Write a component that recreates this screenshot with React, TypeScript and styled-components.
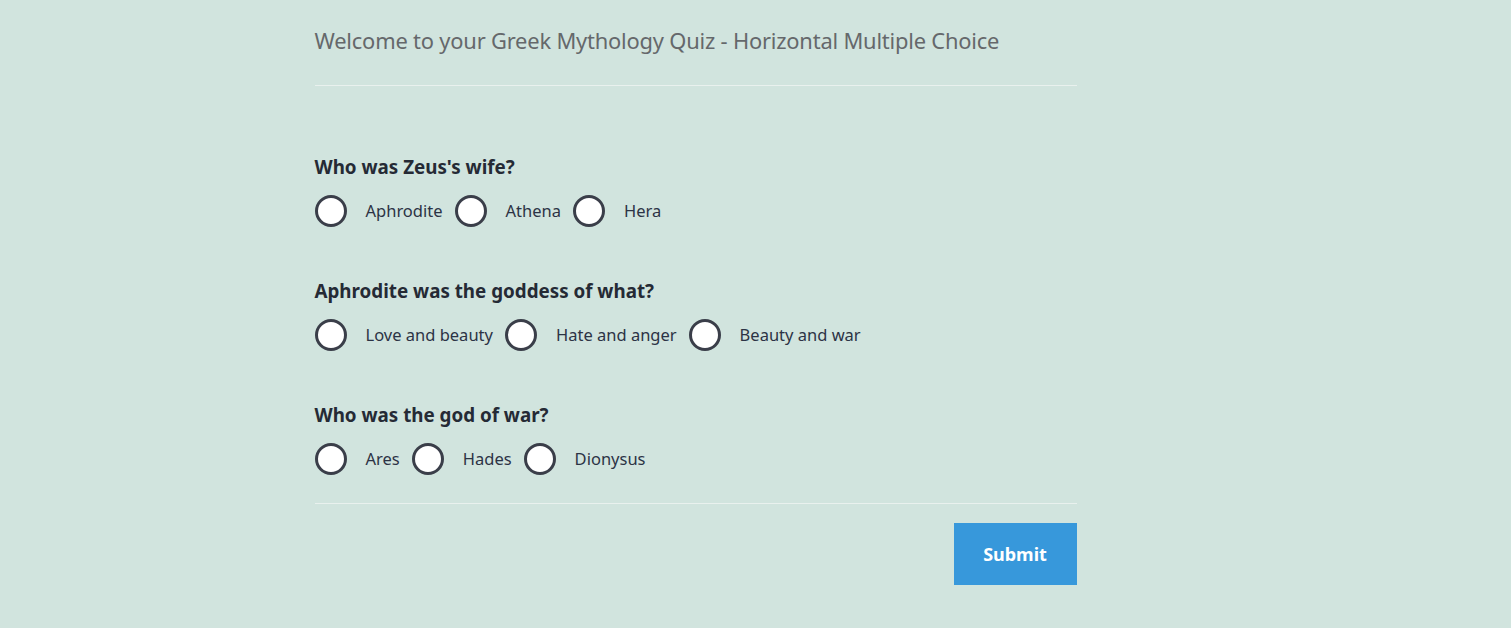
import React from 'react'
import styled, { createGlobalStyle } from 'styled-components'

const questions = [
  { q: "Who was Zeus's wife?", options: ['Aphrodite', 'Athena', 'Hera'] },
  { q: 'Aphrodite was the goddess of what?', options: ['Love and beauty', 'Hate and anger', 'Beauty and war'] },
  { q: 'Who was the god of war?', options: ['Ares', 'Hades', 'Dionysus'] },
]

const GlobalStyle = createGlobalStyle`
  html, body {
    margin: 0;
    background: #d1e4de;
    font-family: "Noto Sans", "Open Sans", sans-serif;
  }
`

export default function App() {
  return (
    <>
      <GlobalStyle />
      <S.Page>
        <S.Quiz>
          <S.Title>Welcome to your Greek Mythology Quiz - Horizontal Multiple Choice</S.Title>
          <S.Rule />
          <S.Questions>
            {questions.map((item, qi) => (
              <S.Question key={qi}>
                <S.Label>{item.q}</S.Label>
                <S.Options>
                  {item.options.map(opt => (
                    <S.Option key={opt}>
                      <S.Radio type="radio" name={`q${qi}`} />
                      <S.OptionText>{opt}</S.OptionText>
                    </S.Option>
                  ))}
                </S.Options>
              </S.Question>
            ))}
          </S.Questions>
          <S.Rule />
          <S.Footer>
            <S.Submit>Submit</S.Submit>
          </S.Footer>
        </S.Quiz>
      </S.Page>
    </>
  )
}

export const S = {
  Page: styled.div`
    min-height: 628px;
    display: flex;
    justify-content: center;
  `,
  Quiz: styled.div`
    width: 762px;
    margin-right: 120px;
    display: flex;
    flex-direction: column;
  `,
  Title: styled.h1`
    margin: 0;
    height: 85px;
    padding-bottom: 4px;
    box-sizing: border-box;
    display: flex;
    align-items: center;
    font-size: 21.9px;
    font-weight: 400;
    color: #65686b;
    letter-spacing: -0.2px;
  `,
  Rule: styled.hr`
    margin: 0;
    border: 0;
    border-top: 1px solid #e9f1ee;
  `,
  Questions: styled.div`
    display: flex;
    flex-direction: column;
    gap: 52px;
    padding: 69px 0 28px;
  `,
  Question: styled.div`
    display: flex;
    flex-direction: column;
    gap: 16px;
  `,
  Label: styled.div`
    font-size: 18.8px;
    font-weight: 700;
    color: #252a35;
    line-height: 24px;
  `,
  Options: styled.div`
    display: flex;
    align-items: center;
    gap: 12px;
  `,
  Option: styled.label`
    display: flex;
    align-items: center;
    gap: 19px;
    cursor: pointer;
  `,
  Radio: styled.input`
    appearance: none;
    margin: 0;
    width: 32px;
    height: 32px;
    border-radius: 50%;
    border: 3px solid #3a3e49;
    background: #fff;
    box-sizing: border-box;
  `,
  OptionText: styled.span`
    font-size: 16.5px;
    color: #2c3345;
    line-height: 32px;
  `,
  Footer: styled.div`
    display: flex;
    justify-content: flex-end;
    padding-top: 19px;
  `,
  Submit: styled.button`
    width: 123px;
    height: 62px;
    border: 0;
    background: #3798db;
    color: #fff;
    font-family: "Noto Sans", "Open Sans", sans-serif;
    font-size: 18px;
    font-weight: 700;
    cursor: pointer;
  `,
}
